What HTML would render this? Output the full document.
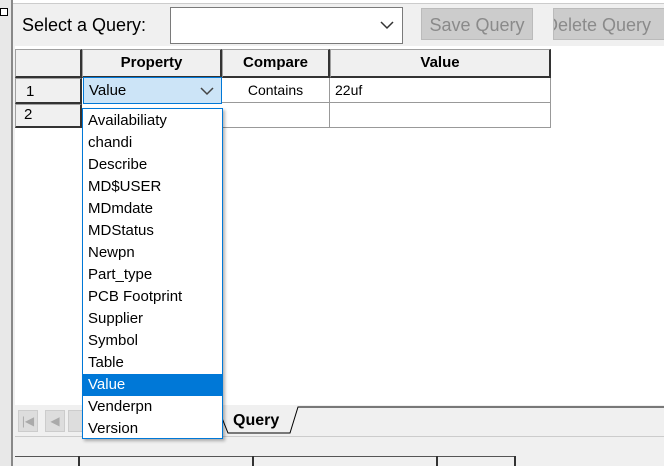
<!DOCTYPE html>
<html><head><meta charset="utf-8"><style>
*{margin:0;padding:0;box-sizing:border-box}
body{width:664px;height:466px;overflow:hidden;background:#f0f0f0;font-family:"Liberation Sans",Arial,sans-serif;position:relative}
.a{position:absolute}
.hdr{background:#f0f0f0;border:1px solid #a0a0a0;border-right:2px solid #333;border-bottom:2px solid #333;font-weight:bold;font-size:15px;text-align:center;line-height:25px}
.cell{background:#fff;border-right:1px solid #999;border-bottom:1px solid #999;font-size:14px;line-height:24px}
.li{height:22px;line-height:22px;padding-left:5px;font-size:15px;color:#000}
</style></head><body>
<div class="a" style="left:0;top:0;width:13px;height:466px;background:#e8e8e8;border-right:2px solid #888"></div>
<div class="a" style="left:0;top:8px;width:8px;height:8px;border:1px solid #000;background:#fff"></div>
<div class="a" style="left:13px;top:0;width:651px;height:4px;background:#fff;border-bottom:1px solid #ccc"></div>
<div class="a" style="left:22px;top:15px;font-size:18px;color:#000">Select a Query:</div>
<div class="a" style="left:170px;top:7px;width:233px;height:37px;background:#fff;border:1px solid #7a7a7a"></div>
<svg class="a" style="left:380px;top:20px" width="14" height="10"><path d="M1 2 L7 8 L13 2" stroke="#333" stroke-width="1.5" fill="none"/></svg>
<div class="a" style="left:421px;top:8px;width:112px;height:32px;background:#cccccc;border:1px solid #bbb;color:#8a8a8a;font-size:18px;line-height:32px;text-align:center">Save Query</div>
<div class="a" style="left:553px;top:8px;width:115px;height:32px;background:#cccccc;border:1px solid #bbb;color:#8a8a8a;font-size:18px;line-height:32px;white-space:nowrap;overflow:hidden;text-indent:-9px">Delete Query</div>
<div class="a" style="left:15px;top:46px;width:649px;height:360px;background:#fff"></div>
<div class="a hdr" style="left:15px;top:49px;width:67px;height:29px"></div>
<div class="a hdr" style="left:82px;top:49px;width:140px;height:29px">Property</div>
<div class="a hdr" style="left:222px;top:49px;width:108px;height:29px">Compare</div>
<div class="a hdr" style="left:330px;top:49px;width:221px;height:29px">Value</div>
<div class="a hdr" style="left:15px;top:78px;width:67px;height:26px;font-weight:normal;text-align:left;padding-left:10px;font-size:15px">1</div>
<div class="a hdr" style="left:15px;top:104px;width:67px;height:24px;font-weight:normal;text-align:left;padding-left:8px;font-size:15px;line-height:20px">2</div>
<div class="a" style="left:83px;top:77px;width:139px;height:27px;background:#cce4f7;border:1px solid #0078d7;font-size:15px;line-height:25px;padding-left:5px">Value</div>
<svg class="a" style="left:200px;top:87px" width="14" height="9"><path d="M1 1 L7 7 L13 1" stroke="#444" stroke-width="1.5" fill="none"/></svg>
<div class="a cell" style="left:222px;top:78px;width:108px;height:25px;text-align:center">Contains</div>
<div class="a cell" style="left:330px;top:78px;width:221px;height:25px;padding-left:5px">22uf</div>
<div class="a cell" style="left:222px;top:103px;width:108px;height:25px"></div>
<div class="a cell" style="left:330px;top:103px;width:221px;height:25px"></div>
<div class="a" style="left:15px;top:405px;width:649px;height:31px;background:#f0f0f0"></div>
<div class="a" style="left:18px;top:410px;width:20px;height:22px;background:#ddd;border:1px solid #ccc;color:#aaa;font-size:12px;text-align:center;line-height:20px">|◀</div>
<div class="a" style="left:45px;top:410px;width:20px;height:22px;background:#ddd;border:1px solid #ccc;color:#aaa;font-size:12px;text-align:center;line-height:20px">◀</div>
<div class="a" style="left:68px;top:410px;width:16px;height:22px;background:#ddd;border:1px solid #ccc"></div>
<svg class="a" style="left:220px;top:405px" width="444" height="32"><path d="M0 8 L8 28 L70 28 L78 2 L444 2" stroke="#000" fill="none"/></svg>
<div class="a" style="left:233px;top:412px;font-size:16px;font-weight:bold">Query</div>
<div class="a" style="left:15px;top:436px;width:649px;height:1px;background:#ccc"></div>
<div class="a" style="left:15px;top:456px;width:500px;height:10px;background:#f0f0f0;border-top:1px solid #555"></div>
<div class="a" style="left:78px;top:456px;width:2px;height:10px;background:#333"></div>
<div class="a" style="left:252px;top:456px;width:2px;height:10px;background:#333"></div>
<div class="a" style="left:436px;top:456px;width:2px;height:10px;background:#333"></div>
<div class="a" style="left:514px;top:456px;width:2px;height:10px;background:#333"></div>
<div class="a" style="left:82px;top:108px;width:141px;height:331px;background:#fff;border:1px solid #0078d7;box-shadow:2px 2px 3px rgba(0,0,0,.3);padding-top:1px">
<div class="li">Availabiliaty</div><div class="li">chandi</div><div class="li">Describe</div><div class="li">MD$USER</div><div class="li">MDmdate</div><div class="li">MDStatus</div><div class="li">Newpn</div><div class="li">Part_type</div><div class="li">PCB Footprint</div><div class="li">Supplier</div><div class="li">Symbol</div><div class="li">Table</div><div class="li" style="background:#0078d7;color:#fff">Value</div><div class="li">Venderpn</div><div class="li">Version</div>
</div>
</body></html>
